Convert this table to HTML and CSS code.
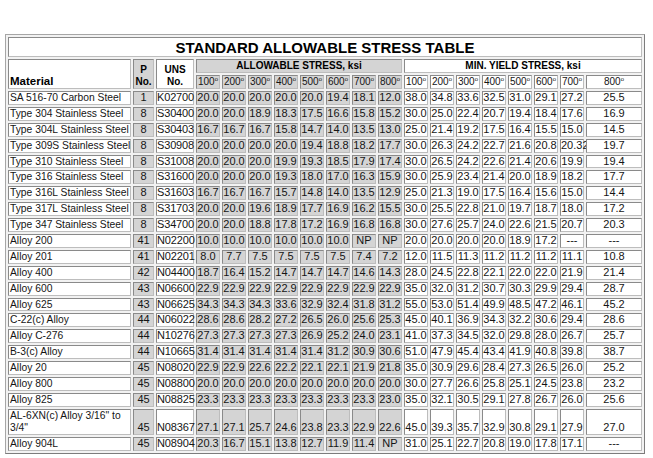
FILE: index.html
```html
<!DOCTYPE html>
<html>
<head>
<meta charset="utf-8">
<title>Standard Allowable Stress Table</title>
<link rel="stylesheet" href="styles.css">
</head>
<body>
<div class="sheet">
<div class="c title">STANDARD ALLOWABLE STRESS TABLE</div>
<div class="c hm">Material</div>
<div class="c g hp">P<br>No.</div>
<div class="c hu">UNS<br>No.</div>
<div class="c g ha">ALLOWABLE STRESS, ksi</div>
<div class="c hy">MIN. YIELD STRESS, ksi</div>
<div class="c g t">100<sup class="dg">o</sup></div><div class="c g t">200<sup class="dg">o</sup></div><div class="c g t">300<sup class="dg">o</sup></div><div class="c g t">400<sup class="dg">o</sup></div><div class="c g t">500<sup class="dg">o</sup></div><div class="c g t">600<sup class="dg">o</sup></div><div class="c g t">700<sup class="dg">o</sup></div><div class="c g t">800<sup class="dg">o</sup></div>
<div class="c t">100<sup class="dg">o</sup></div><div class="c t">200<sup class="dg">o</sup></div><div class="c t">300<sup class="dg">o</sup></div><div class="c t">400<sup class="dg">o</sup></div><div class="c t">500<sup class="dg">o</sup></div><div class="c t">600<sup class="dg">o</sup></div><div class="c t">700<sup class="dg">o</sup></div><div class="c t">800<sup class="dg">o</sup></div>

<div class="c m">SA 516-70 Carbon Steel</div><div class="c g p">1</div><div class="c u">K02700</div>
<div class="c g">20.0</div><div class="c g">20.0</div><div class="c g">20.0</div><div class="c g">20.0</div><div class="c g">20.0</div><div class="c g">19.4</div><div class="c g">18.1</div><div class="c g">12.0</div>
<div class="c">38.0</div><div class="c">34.8</div><div class="c">33.6</div><div class="c">32.5</div><div class="c">31.0</div><div class="c">29.1</div><div class="c">27.2</div><div class="c">25.5</div>

<div class="c m">Type 304 Stainless Steel</div><div class="c g p">8</div><div class="c u">S30400</div>
<div class="c g">20.0</div><div class="c g">20.0</div><div class="c g">18.9</div><div class="c g">18.3</div><div class="c g">17.5</div><div class="c g">16.6</div><div class="c g">15.8</div><div class="c g">15.2</div>
<div class="c">30.0</div><div class="c">25.0</div><div class="c">22.4</div><div class="c">20.7</div><div class="c">19.4</div><div class="c">18.4</div><div class="c">17.6</div><div class="c">16.9</div>

<div class="c m">Type 304L Stainless Steel</div><div class="c g p">8</div><div class="c u">S30403</div>
<div class="c g">16.7</div><div class="c g">16.7</div><div class="c g">16.7</div><div class="c g">15.8</div><div class="c g">14.7</div><div class="c g">14.0</div><div class="c g">13.5</div><div class="c g">13.0</div>
<div class="c">25.0</div><div class="c">21.4</div><div class="c">19.2</div><div class="c">17.5</div><div class="c">16.4</div><div class="c">15.5</div><div class="c">15.0</div><div class="c">14.5</div>

<div class="c m">Type 309S Stainless Steel</div><div class="c g p">8</div><div class="c u">S30908</div>
<div class="c g">20.0</div><div class="c g">20.0</div><div class="c g">20.0</div><div class="c g">20.0</div><div class="c g">19.4</div><div class="c g">18.8</div><div class="c g">18.2</div><div class="c g">17.7</div>
<div class="c">30.0</div><div class="c">26.3</div><div class="c">24.2</div><div class="c">22.7</div><div class="c">21.6</div><div class="c">20.8</div><div class="c">20.32</div><div class="c">19.7</div>

<div class="c m">Type 310 Stainless Steel</div><div class="c g p">8</div><div class="c u">S31008</div>
<div class="c g">20.0</div><div class="c g">20.0</div><div class="c g">20.0</div><div class="c g">19.9</div><div class="c g">19.3</div><div class="c g">18.5</div><div class="c g">17.9</div><div class="c g">17.4</div>
<div class="c">30.0</div><div class="c">26.5</div><div class="c">24.2</div><div class="c">22.6</div><div class="c">21.4</div><div class="c">20.6</div><div class="c">19.9</div><div class="c">19.4</div>

<div class="c m">Type 316 Stainless Steel</div><div class="c g p">8</div><div class="c u">S31600</div>
<div class="c g">20.0</div><div class="c g">20.0</div><div class="c g">20.0</div><div class="c g">19.3</div><div class="c g">18.0</div><div class="c g">17.0</div><div class="c g">16.3</div><div class="c g">15.9</div>
<div class="c">30.0</div><div class="c">25.9</div><div class="c">23.4</div><div class="c">21.4</div><div class="c">20.0</div><div class="c">18.9</div><div class="c">18.2</div><div class="c">17.7</div>

<div class="c m">Type 316L Stainless Steel</div><div class="c g p">8</div><div class="c u">S31603</div>
<div class="c g">16.7</div><div class="c g">16.7</div><div class="c g">16.7</div><div class="c g">15.7</div><div class="c g">14.8</div><div class="c g">14.0</div><div class="c g">13.5</div><div class="c g">12.9</div>
<div class="c">25.0</div><div class="c">21.3</div><div class="c">19.0</div><div class="c">17.5</div><div class="c">16.4</div><div class="c">15.6</div><div class="c">15.0</div><div class="c">14.4</div>

<div class="c m">Type 317L Stainless Steel</div><div class="c g p">8</div><div class="c u">S31703</div>
<div class="c g">20.0</div><div class="c g">20.0</div><div class="c g">19.6</div><div class="c g">18.9</div><div class="c g">17.7</div><div class="c g">16.9</div><div class="c g">16.2</div><div class="c g">15.5</div>
<div class="c">30.0</div><div class="c">25.5</div><div class="c">22.8</div><div class="c">21.0</div><div class="c">19.7</div><div class="c">18.7</div><div class="c">18.0</div><div class="c">17.2</div>

<div class="c m">Type 347 Stainless Steel</div><div class="c g p">8</div><div class="c u">S34700</div>
<div class="c g">20.0</div><div class="c g">20.0</div><div class="c g">18.8</div><div class="c g">17.8</div><div class="c g">17.2</div><div class="c g">16.9</div><div class="c g">16.8</div><div class="c g">16.8</div>
<div class="c">30.0</div><div class="c">27.6</div><div class="c">25.7</div><div class="c">24.0</div><div class="c">22.6</div><div class="c">21.5</div><div class="c">20.7</div><div class="c">20.3</div>

<div class="c m">Alloy 200</div><div class="c g p">41</div><div class="c u">N02200</div>
<div class="c g">10.0</div><div class="c g">10.0</div><div class="c g">10.0</div><div class="c g">10.0</div><div class="c g">10.0</div><div class="c g">10.0</div><div class="c g">NP</div><div class="c g">NP</div>
<div class="c">20.0</div><div class="c">20.0</div><div class="c">20.0</div><div class="c">20.0</div><div class="c">18.9</div><div class="c">17.2</div><div class="c">---</div><div class="c">---</div>

<div class="c m">Alloy 201</div><div class="c g p">41</div><div class="c u">N02201</div>
<div class="c g">8.0</div><div class="c g">7.7</div><div class="c g">7.5</div><div class="c g">7.5</div><div class="c g">7.5</div><div class="c g">7.5</div><div class="c g">7.4</div><div class="c g">7.2</div>
<div class="c">12.0</div><div class="c">11.5</div><div class="c">11.3</div><div class="c">11.2</div><div class="c">11.2</div><div class="c">11.2</div><div class="c">11.1</div><div class="c">10.8</div>

<div class="c m">Alloy 400</div><div class="c g p">42</div><div class="c u">N04400</div>
<div class="c g">18.7</div><div class="c g">16.4</div><div class="c g">15.2</div><div class="c g">14.7</div><div class="c g">14.7</div><div class="c g">14.7</div><div class="c g">14.6</div><div class="c g">14.3</div>
<div class="c">28.0</div><div class="c">24.5</div><div class="c">22.8</div><div class="c">22.1</div><div class="c">22.0</div><div class="c">22.0</div><div class="c">21.9</div><div class="c">21.4</div>

<div class="c m">Alloy 600</div><div class="c g p">43</div><div class="c u">N06600</div>
<div class="c g">22.9</div><div class="c g">22.9</div><div class="c g">22.9</div><div class="c g">22.9</div><div class="c g">22.9</div><div class="c g">22.9</div><div class="c g">22.9</div><div class="c g">22.9</div>
<div class="c">35.0</div><div class="c">32.0</div><div class="c">31.2</div><div class="c">30.7</div><div class="c">30.3</div><div class="c">29.9</div><div class="c">29.4</div><div class="c">28.7</div>

<div class="c m">Alloy 625</div><div class="c g p">43</div><div class="c u">N06625</div>
<div class="c g">34.3</div><div class="c g">34.3</div><div class="c g">34.3</div><div class="c g">33.6</div><div class="c g">32.9</div><div class="c g">32.4</div><div class="c g">31.8</div><div class="c g">31.2</div>
<div class="c">55.0</div><div class="c">53.0</div><div class="c">51.4</div><div class="c">49.9</div><div class="c">48.5</div><div class="c">47.2</div><div class="c">46.1</div><div class="c">45.2</div>

<div class="c m">C-22(c) Alloy</div><div class="c g p">44</div><div class="c u">N06022</div>
<div class="c g">28.6</div><div class="c g">28.6</div><div class="c g">28.2</div><div class="c g">27.2</div><div class="c g">26.5</div><div class="c g">26.0</div><div class="c g">25.6</div><div class="c g">25.3</div>
<div class="c">45.0</div><div class="c">40.1</div><div class="c">36.9</div><div class="c">34.3</div><div class="c">32.2</div><div class="c">30.6</div><div class="c">29.4</div><div class="c">28.6</div>

<div class="c m">Alloy C-276</div><div class="c g p">44</div><div class="c u">N10276</div>
<div class="c g">27.3</div><div class="c g">27.3</div><div class="c g">27.3</div><div class="c g">27.3</div><div class="c g">26.9</div><div class="c g">25.2</div><div class="c g">24.0</div><div class="c g">23.1</div>
<div class="c">41.0</div><div class="c">37.3</div><div class="c">34.5</div><div class="c">32.0</div><div class="c">29.8</div><div class="c">28.0</div><div class="c">26.7</div><div class="c">25.7</div>

<div class="c m">B-3(c) Alloy</div><div class="c g p">44</div><div class="c u">N10665</div>
<div class="c g">31.4</div><div class="c g">31.4</div><div class="c g">31.4</div><div class="c g">31.4</div><div class="c g">31.4</div><div class="c g">31.2</div><div class="c g">30.9</div><div class="c g">30.6</div>
<div class="c">51.0</div><div class="c">47.9</div><div class="c">45.4</div><div class="c">43.4</div><div class="c">41.9</div><div class="c">40.8</div><div class="c">39.8</div><div class="c">38.7</div>

<div class="c m">Alloy 20</div><div class="c g p">45</div><div class="c u">N08020</div>
<div class="c g">22.9</div><div class="c g">22.9</div><div class="c g">22.6</div><div class="c g">22.2</div><div class="c g">22.1</div><div class="c g">22.1</div><div class="c g">21.9</div><div class="c g">21.8</div>
<div class="c">35.0</div><div class="c">30.9</div><div class="c">29.6</div><div class="c">28.4</div><div class="c">27.3</div><div class="c">26.5</div><div class="c">26.0</div><div class="c">25.2</div>

<div class="c m">Alloy 800</div><div class="c g p">45</div><div class="c u">N08800</div>
<div class="c g">20.0</div><div class="c g">20.0</div><div class="c g">20.0</div><div class="c g">20.0</div><div class="c g">20.0</div><div class="c g">20.0</div><div class="c g">20.0</div><div class="c g">20.0</div>
<div class="c">30.0</div><div class="c">27.7</div><div class="c">26.6</div><div class="c">25.8</div><div class="c">25.1</div><div class="c">24.5</div><div class="c">23.8</div><div class="c">23.2</div>

<div class="c m">Alloy 825</div><div class="c g p">45</div><div class="c u">N08825</div>
<div class="c g">23.3</div><div class="c g">23.3</div><div class="c g">23.3</div><div class="c g">23.3</div><div class="c g">23.3</div><div class="c g">23.3</div><div class="c g">23.3</div><div class="c g">23.0</div>
<div class="c">35.0</div><div class="c">32.1</div><div class="c">30.5</div><div class="c">29.1</div><div class="c">27.8</div><div class="c">26.7</div><div class="c">26.0</div><div class="c">25.6</div>

<div class="c m wrap">AL-6XN(c) Alloy 3/16" to 3/4"</div><div class="c g p">45</div><div class="c u">N08367</div>
<div class="c g">27.1</div><div class="c g">27.1</div><div class="c g">25.7</div><div class="c g">24.6</div><div class="c g">23.8</div><div class="c g">23.3</div><div class="c g">22.9</div><div class="c g">22.6</div>
<div class="c">45.0</div><div class="c">39.3</div><div class="c">35.7</div><div class="c">32.9</div><div class="c">30.8</div><div class="c">29.1</div><div class="c">27.9</div><div class="c">27.0</div>

<div class="c m">Alloy 904L</div><div class="c g p">45</div><div class="c u">N08904</div>
<div class="c g">20.3</div><div class="c g">16.7</div><div class="c g">15.1</div><div class="c g">13.8</div><div class="c g">12.7</div><div class="c g">11.9</div><div class="c g">11.4</div><div class="c g">NP</div>
<div class="c">31.0</div><div class="c">25.1</div><div class="c">22.7</div><div class="c">20.8</div><div class="c">19.0</div><div class="c">17.8</div><div class="c">17.1</div><div class="c">---</div>
</div>
</body>
</html>
```

FILE: styles.css
```css
* { box-sizing: border-box; }

body {
  margin: 0;
  background: #ffffff;
  font-family: "Liberation Sans", Arial, sans-serif;
  color: #151515;
}

.sheet {
  margin: 34px 0 0 5px;
  width: 640px;
  padding: 2px;
  border: 1px solid #a6a6a6;
  border-right-color: #7c7c7c;
  border-bottom-color: #7c7c7c;
  background: #f2f2f2;
  display: grid;
  grid-template-columns: 123px 21px 38px repeat(15, 24px) 56px;
  grid-template-rows: 20px 14px 14px repeat(20, 13.9px) 25.9px 13.9px;
  gap: 2px;
}

.c {
  border: 1px solid;
  border-color: #8a8a8a #bdbdbd #bdbdbd #8a8a8a;
  background: #ffffff;
  display: grid;
  align-content: end;
  white-space: nowrap;
  font-size: 11px;
  line-height: 11.9px;
  text-align: center;
}

.g { background: #d4d4d4; }

.title {
  grid-column: 1 / -1;
  font-size: 15px;
  font-weight: bold;
  line-height: 17px;
  color: #000;
}

.hm {
  grid-row: span 2;
  font-weight: bold;
  font-size: 11.5px;
  line-height: 12px;
  text-align: left;
  padding: 0 0 1px 1px;
  color: #000;
}

.hp, .hu {
  grid-row: span 2;
  font-weight: bold;
  font-size: 10px;
  line-height: 11.5px;
  padding-bottom: 1px;
  color: #000;
}

.ha, .hy {
  grid-column: span 8;
  font-weight: bold;
  font-size: 10px;
  line-height: 12px;
  color: #000;
}

.t {
  display: block;
  font-size: 10px;
  line-height: 12px;
}

.dg {
  font-size: 6px;
  line-height: 0;
  vertical-align: 4px;
}

.m {
  text-align: left;
  font-size: 10.3px;
  padding-left: 1px;
}

.wrap { white-space: normal; }

.u {
  text-align: left;
  letter-spacing: -0.15px;
}
```
